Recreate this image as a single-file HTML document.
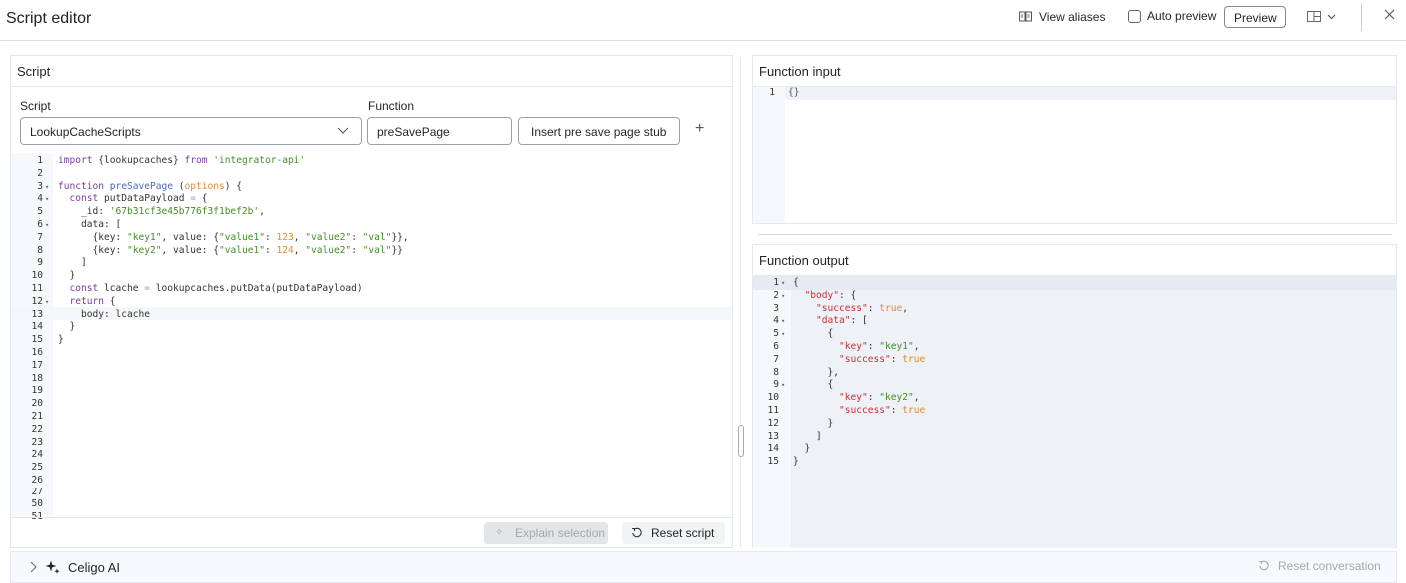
<!DOCTYPE html>
<html><head><meta charset="utf-8"><style>
*{box-sizing:border-box;margin:0;padding:0}
body{width:1406px;height:583px;overflow:hidden;background:#fff;font-family:"Liberation Sans",sans-serif;color:#1f2329;position:relative}
.abs{position:absolute}
.panel{position:absolute;border:1px solid #e3e8ee;background:#fff}
.ph{position:absolute;left:0;right:0;top:0;height:31px;border-bottom:1px solid #e3e8ee;font-size:13px;padding:8px 6px}
.mono{font-family:"DejaVu Sans Mono","Liberation Mono",monospace;font-size:9.55px}
.ln{position:absolute;text-align:right;color:#333}
.line{height:12.8px;line-height:12.8px;white-space:pre}
.kw{color:#7a3e9d}.fn{color:#4b69c6}.st{color:#448c27}.nu{color:#e08c34}.op{color:#8c9bb0}
.jk{color:#c2313a}.js{color:#448c27}.jb{color:#e08c34}
.btn{position:absolute;border:1px solid #b7bcc4;border-radius:4px;font-size:12px;background:#fff}
.inp{position:absolute;border:1px solid #9aa0a8;border-radius:4px;font-size:12px;padding:7px 9px;height:28px}
</style></head><body>
<div class="abs" style="left:6px;top:10px;font-size:16px;color:#222">Script editor</div>
<svg class="abs" style="left:1019px;top:11px" width="13" height="11" viewBox="0 0 13 11"><rect x="0.5" y="1" width="5.5" height="9" fill="none" stroke="#555"/><rect x="7" y="1" width="5.5" height="9" fill="none" stroke="#555"/><path d="M2 4h2M2 6h2M8.5 4h2M8.5 6h2" stroke="#555"/></svg>
<div class="abs" style="left:1039px;top:10px;font-size:12px">View aliases</div>
<div class="abs" style="left:1128px;top:10px;width:13px;height:13px;border:1px solid #666;border-radius:3px"></div>
<div class="abs" style="left:1147px;top:9px;font-size:12px">Auto preview</div>
<div class="btn" style="left:1224px;top:6px;width:62px;height:22px;padding:4px 9px;border-color:#888">Preview</div>
<svg class="abs" style="left:1307px;top:11px" width="32" height="12" viewBox="0 0 32 12"><rect x="0.5" y="0.5" width="13" height="10" fill="none" stroke="#666"/><path d="M7 .5v10M7 5.5h7" stroke="#666"/><path d="M21 4l3.5 3.5L28 4" fill="none" stroke="#444"/></svg>
<div class="abs" style="left:1361px;top:3px;width:1px;height:28px;background:#ccc"></div>
<svg class="abs" style="left:1384px;top:9px" width="11" height="11"><path d="M1 1l9 9M10 1l-9 9" stroke="#555" stroke-width="1.1"/></svg>
<div class="abs" style="left:0;top:40px;width:1406px;height:1px;background:#dde1e6"></div>

<div class="panel" style="left:10px;top:55px;width:723px;height:493px">
<div class="ph">Script</div>
<div class="abs" style="left:9px;top:43px;font-size:12px">Script</div>
<div class="abs" style="left:357px;top:43px;font-size:12px">Function</div>
<div class="inp" style="left:9px;top:61px;width:342px">LookupCacheScripts</div>
<svg class="abs" style="left:326px;top:71px" width="12" height="8"><path d="M1 1l5 5 5-5" fill="none" stroke="#555"/></svg>
<div class="inp" style="left:356px;top:61px;width:145px">preSavePage</div>
<div class="inp" style="left:507px;top:61px;width:162px;padding-left:12px">Insert pre save page stub</div>
<div class="abs" style="left:684px;top:64px;font-size:16px;color:#555">+</div>
<div class="abs" style="left:0;top:97px;width:42px;height:364px;background:#f7f8fb"></div>
<div class="abs" style="left:0;top:251px;width:721px;height:13px;background:#f4f6f9"></div>
<div class="ln mono" style="left:0;top:99px;width:32px"><div class="line">1</div><div class="line">2</div><div class="line">3</div><div class="line">4</div><div class="line">5</div><div class="line">6</div><div class="line">7</div><div class="line">8</div><div class="line">9</div><div class="line">10</div><div class="line">11</div><div class="line">12</div><div class="line">13</div><div class="line">14</div><div class="line">15</div><div class="line">16</div><div class="line">17</div><div class="line">18</div><div class="line">19</div><div class="line">20</div><div class="line">21</div><div class="line">22</div><div class="line">23</div><div class="line">24</div><div class="line">25</div><div class="line">26</div><div class="line" style="height:10px;line-height:8px;overflow:hidden">27</div><div class="line">50</div><div class="line" style="height:8px;overflow:hidden">51</div></div>
<div class="mono abs" style="left:34px;top:99px;color:#666;font-size:7px"><div class="line"> </div><div class="line"> </div><div class="line">▾</div><div class="line">▾</div><div class="line"> </div><div class="line">▾</div><div class="line"> </div><div class="line"> </div><div class="line"> </div><div class="line"> </div><div class="line"> </div><div class="line">▾</div></div>
<div class="mono abs" style="left:47px;top:99px;color:#333"><div class="line"><span class="kw">import</span> {lookupcaches} <span class="kw">from</span> <span class="st">'integrator-api'</span></div><div class="line"> </div><div class="line"><span class="kw">function</span> <span class="fn">preSavePage</span> (<span class="nu">options</span>) {</div><div class="line">  <span class="kw">const</span> putDataPayload <span class="op">=</span> {</div><div class="line">    _id: <span class="st">'67b31cf3e45b776f3f1bef2b'</span>,</div><div class="line">    data: [</div><div class="line">      {key: <span class="st">"key1"</span>, value: {<span class="st">"value1"</span>: <span class="nu">123</span>, <span class="st">"value2"</span>: <span class="st">"val"</span>}},</div><div class="line">      {key: <span class="st">"key2"</span>, value: {<span class="st">"value1"</span>: <span class="nu">124</span>, <span class="st">"value2"</span>: <span class="st">"val"</span>}}</div><div class="line">    ]</div><div class="line">  }</div><div class="line">  <span class="kw">const</span> lcache <span class="op">=</span> lookupcaches.putData(putDataPayload)</div><div class="line">  <span class="kw">return</span> {</div><div class="line">    body: lcache</div><div class="line">  }</div><div class="line">}</div></div>
<div class="abs" style="left:0;top:461px;width:721px;height:1px;background:#e3e8ee"></div>
<div class="abs" style="left:473px;top:466px;width:124px;height:22px;background:#e4e5e7;border-radius:3px;color:#a5a8ad;font-size:12px;padding:4px 0 0 31px">Explain selection</div>
<div class="abs" style="left:484px;top:471px;font-size:10px;color:#aaa">✧</div>
<div class="abs" style="left:611px;top:466px;width:103px;height:22px;background:#f2f3f5;border-radius:3px;font-size:12px;padding:4px 0 0 29px">Reset script</div>
<svg class="abs" style="left:620px;top:471px" width="12" height="12" viewBox="0 0 12 12"><path d="M3 2.5A4.2 4.2 0 1 1 1.8 6" fill="none" stroke="#333" stroke-width="1.1"/><path d="M1 1.5h2.5v2.5" fill="none" stroke="#333" stroke-width="1.1"/></svg>
</div>

<div class="abs" style="left:740px;top:58px;width:1px;height:490px;background:#e3e8ee"></div>
<div class="abs" style="left:738px;top:425px;width:6px;height:32px;border:1px solid #aaa;border-radius:3px;background:#fff"></div>

<div class="panel" style="left:752px;top:55px;width:645px;height:169px">
<div class="ph">Function input</div>
<div class="abs" style="left:0;top:31px;width:32px;height:136px;background:#f7f8fb"></div>
<div class="abs" style="left:32px;top:31px;width:611px;height:13px;background:#edf2f8"></div>
<div class="mono abs" style="left:0;top:31px;width:22px;text-align:right;color:#333"><div class="line">1</div></div>
<div class="mono abs" style="left:35px;top:31px;color:#555"><div class="line">{}</div></div>
</div>
<div class="abs" style="left:758px;top:234px;width:634px;height:1px;background:#d5d9de"></div>

<div class="panel" style="left:752px;top:244px;width:645px;height:304px">
<div class="ph">Function output</div>
<div class="abs" style="left:0;top:31px;width:38px;height:272px;background:#f7f8fb"></div>
<div class="abs" style="left:38px;top:31px;width:605px;height:272px;background:#eef1f5"></div>
<div class="abs" style="left:0;top:31px;width:643px;height:14px;background:#e6ebf1"></div>
<div class="mono abs" style="left:0;top:32px;width:26px;text-align:right;color:#333"><div class="line">1</div><div class="line">2</div><div class="line">3</div><div class="line">4</div><div class="line">5</div><div class="line">6</div><div class="line">7</div><div class="line">8</div><div class="line">9</div><div class="line">10</div><div class="line">11</div><div class="line">12</div><div class="line">13</div><div class="line">14</div><div class="line">15</div></div>
<div class="mono abs" style="left:28px;top:32px;color:#666;font-size:7px"><div class="line">▾</div><div class="line">▾</div><div class="line"> </div><div class="line">▾</div><div class="line">▾</div><div class="line"> </div><div class="line"> </div><div class="line"> </div><div class="line">▾</div></div>
<div class="mono abs" style="left:40px;top:32px;color:#333"><div class="line">{</div><div class="line">  <span class="jk">"body"</span>: {</div><div class="line">    <span class="jk">"success"</span>: <span class="jb">true</span>,</div><div class="line">    <span class="jk">"data"</span>: [</div><div class="line">      {</div><div class="line">        <span class="jk">"key"</span>: <span class="js">"key1"</span>,</div><div class="line">        <span class="jk">"success"</span>: <span class="jb">true</span></div><div class="line">      },</div><div class="line">      {</div><div class="line">        <span class="jk">"key"</span>: <span class="js">"key2"</span>,</div><div class="line">        <span class="jk">"success"</span>: <span class="jb">true</span></div><div class="line">      }</div><div class="line">    ]</div><div class="line">  }</div><div class="line">}</div></div>
</div>

<div class="abs" style="left:10px;top:551px;width:1387px;height:32px;background:#f8f9fc;border:1px solid #e6e9ee"></div>
<svg class="abs" style="left:29px;top:561px" width="8" height="12"><path d="M2 1l5 5-5 5" fill="none" stroke="#666"/></svg>
<svg class="abs" style="left:45px;top:559px" width="16" height="16" viewBox="0 0 16 16"><path d="M6 1.5L7.3 5.7 11.5 7 7.3 8.3 6 12.5 4.7 8.3 .5 7 4.7 5.7z" fill="#222"/><path d="M12 9.5l.7 2 2 .7-2 .7-.7 2-.7-2-2-.7 2-.7z" fill="#222"/></svg>
<div class="abs" style="left:68px;top:560px;font-size:13px">Celigo AI</div>
<svg class="abs" style="left:1258px;top:560px" width="12" height="12" viewBox="0 0 12 12"><path d="M3 2.5A4.2 4.2 0 1 1 1.8 6" fill="none" stroke="#aaa" stroke-width="1.1"/><path d="M1 1.5h2.5v2.5" fill="none" stroke="#aaa" stroke-width="1.1"/></svg>
<div class="abs" style="left:1278px;top:559px;font-size:12px;color:#a5a8ad">Reset conversation</div>
</body></html>
